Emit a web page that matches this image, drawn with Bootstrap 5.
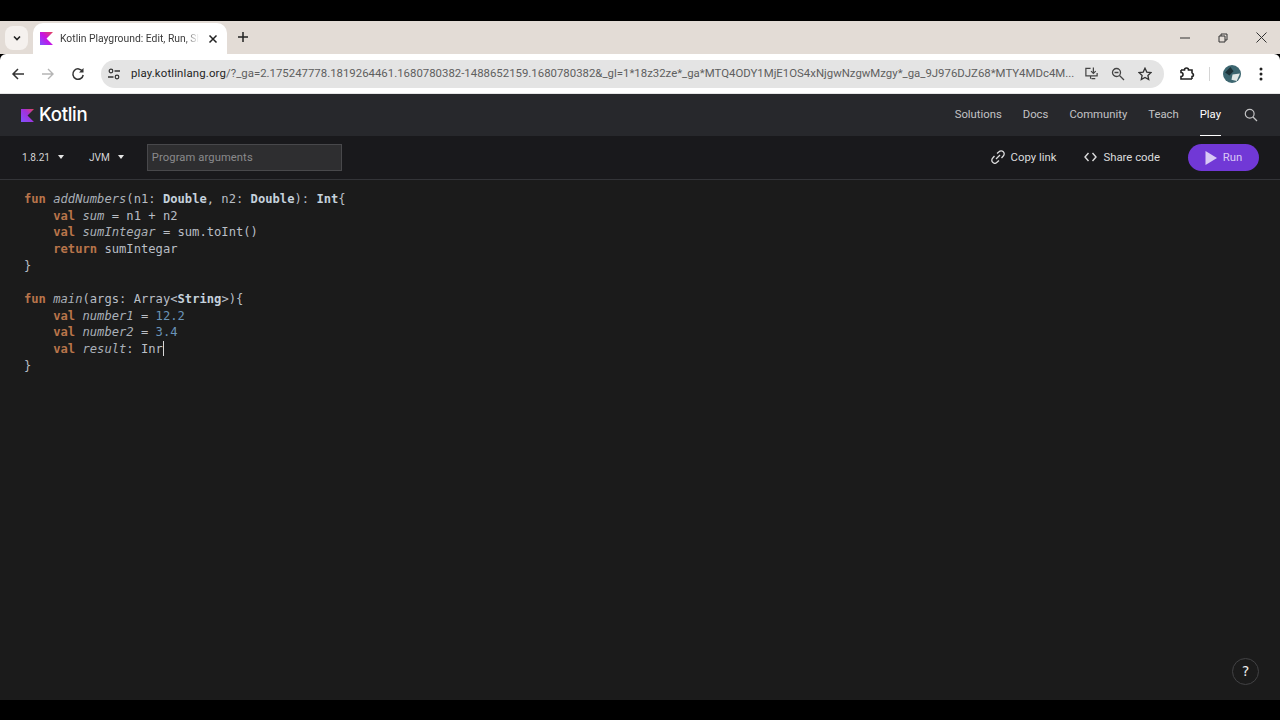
<!DOCTYPE html>
<html lang="en">
<head>
<meta charset="utf-8">
<title>Kotlin Playground</title>
<link href="https://cdn.jsdelivr.net/npm/bootstrap@5.3.0/dist/css/bootstrap.min.css" rel="stylesheet">
<style>
html,body{height:720px;overflow:hidden;background:#000;margin:0}
body{font-family:"Roboto","Noto Sans",sans-serif;padding:21px 0 20px}
.shell{height:679px;display:flex;flex-direction:column}
.tabstrip{height:33px;background:#e3dcd6;position:relative;flex:none}
.tabchev{width:23px;height:24px;background:#f5f1ee;border-radius:8px;margin-left:5px;margin-top:5px}
.browser-tab{width:194px;background:#fff;border-radius:10px 10px 0 0;margin-left:5px;margin-top:2px;padding:0 9px 0 7px;height:31px}
.tabtitle{font-family:"Roboto","Noto Sans",sans-serif;font-size:10.35px;color:#3a3a3a;width:139px;margin-left:7px;white-space:nowrap;-webkit-mask-image:linear-gradient(90deg,#000 90%,transparent 100%);mask-image:linear-gradient(90deg,#000 90%,transparent 100%)}
.winctl{margin-left:auto}
.winbtn{width:38px;height:33px}
.addrrow{height:40px;background:#fff;flex:none;padding-left:3px;padding-right:7px;border-bottom:1px solid #e6e6e6;border-radius:6px 6px 0 0}
.navbtn{width:30px;height:30px}
.omni{width:1063px;height:28px;background:#e4e4e4;border-radius:14px;margin-left:8px;padding:0 12px 0 6px}
.urltxt{font-family:"Roboto","Noto Sans",sans-serif;font-size:11.4px;color:#5f5f5f;white-space:nowrap;width:941px;margin-left:10px;flex:none}
.urltxt b{font-weight:400;color:#1f1f1f;letter-spacing:.15px}
.kt-nav{height:42px;background:#27282c;flex:none;padding:0 22px 0 21px}
.kt-word{font-family:"Inter",sans-serif;font-size:18.6px;color:#fff;font-weight:500;margin-left:5px;letter-spacing:-.3px}
.kt-link{font-size:11.3px;color:#c3c3c5;height:42px;display:flex;align-items:center;position:relative;margin-right:21px;text-decoration:none;padding-top:1px}
.kt-link.on{color:#fff;margin-right:23px}
.kt-link.on::after{content:"";position:absolute;left:0;right:0;bottom:0;height:1px;background:#fff}
.kt-tools{height:44px;background:#19191c;border-bottom:1px solid #333438;flex:none;padding:0 21px 0 22px}
.pick{font-size:10.1px;color:#d5d5d6;display:flex;align-items:center}
.pick::after{content:"";margin-left:8px;border-left:3.5px solid transparent;border-right:3.5px solid transparent;border-top:4px solid #e5e5e5}
.pick-jvm{margin-left:25px}
.argbox{width:195px;height:27px;background:#2e2e30;border:1px solid #48484b;color:#8a8a8c;font-size:11.2px;padding:1px 4px 0;display:flex;align-items:center;letter-spacing:.1px;margin-left:23px}
.tool{font-size:11.35px;color:#dcdcdd;display:flex;align-items:center;gap:6px}
.runbtn{width:71px;height:27px;background:#7138d6;color:#d9c9f5;border-radius:14px;font-size:11.3px;display:flex;align-items:center;justify-content:center;gap:6px;margin-left:28px;padding-top:1px}
.editor{flex:1;background:#1b1b1b;position:relative;padding:10.9px 0 0 24px;font-family:"DejaVu Sans Mono","Liberation Mono",monospace;font-size:12.15px;line-height:16.7px;color:#b9bec5;overflow:hidden}
.cl{height:16.7px;white-space:pre}
.kw{color:#b8744a;font-weight:700}
.fn{font-style:italic;color:#aab0b8}
.ty{color:#c5d1dc;font-weight:700}
.nm{color:#6a94b8}
.caret{display:inline-block;width:1px;height:15px;background:#d8d8d8;vertical-align:-3px}
.helpdot{position:absolute;right:21px;bottom:15px;width:27px;height:27px;border:1px solid #424244;border-radius:50%;color:#eee;font-size:14px;display:flex;align-items:center;justify-content:center}
</style>
</head>
<body>
<div class="shell">
  <div class="tabstrip d-flex align-items-start">
    <div class="tabchev d-flex align-items-center justify-content-center">
      <svg width="10" height="10" viewBox="0 0 10 10"><path d="M2 3.5 5 6.5 8 3.5" fill="none" stroke="#222" stroke-width="1.6"/></svg>
    </div>
    <div class="browser-tab d-flex align-items-center">
      <svg width="13" height="13" viewBox="0 0 13 13"><defs><linearGradient id="kg" x1="0" y1="1" x2="1" y2="0"><stop offset="0" stop-color="#7f52ff"/><stop offset=".5" stop-color="#c811e2"/><stop offset="1" stop-color="#e44857"/></linearGradient></defs><path d="M0 0H13L6.5 6.5 13 13H0Z" fill="url(#kg)"/></svg>
      <span class="tabtitle">Kotlin Playground: Edit, Run, Sh</span>
      <svg class="ms-auto" width="10" height="10" viewBox="0 0 10 10"><path d="M1.5 1.5 8.5 8.5M8.5 1.5 1.5 8.5" stroke="#222" stroke-width="1.5"/></svg>
    </div>
    <div class="ms-2 mt-2 d-flex">
      <svg width="16" height="16" viewBox="0 0 16 16"><path d="M8 3V13M3 8H13" stroke="#222" stroke-width="1.5"/></svg>
    </div>
    <div class="winctl d-flex">
      <div class="winbtn d-flex align-items-center justify-content-center"><svg width="10" height="10" viewBox="0 0 10 10"><path d="M0 5H10" stroke="#333" stroke-width="1"/></svg></div>
      <div class="winbtn d-flex align-items-center justify-content-center"><svg width="10" height="10" viewBox="0 0 10 10"><path d="M1 3H7V9H1ZM3 3V1H9V7H7" fill="none" stroke="#333" stroke-width="1"/></svg></div>
      <div class="winbtn d-flex align-items-center justify-content-center"><svg width="11" height="11" viewBox="0 0 11 11"><path d="M.5.5 10.5 10.5M10.5.5.5 10.5" stroke="#333" stroke-width="1"/></svg></div>
    </div>
  </div>

  <div class="addrrow d-flex align-items-center">
    <div class="navbtn d-flex align-items-center justify-content-center"><svg width="14" height="14" viewBox="0 0 14 14"><path d="M13 7H2M7 2 2 7 7 12" fill="none" stroke="#333" stroke-width="1.5"/></svg></div>
    <div class="navbtn d-flex align-items-center justify-content-center"><svg width="14" height="14" viewBox="0 0 14 14"><path d="M1 7H12M7 2 12 7 7 12" fill="none" stroke="#b5b5b5" stroke-width="1.4"/></svg></div>
    <div class="navbtn d-flex align-items-center justify-content-center"><svg width="14" height="14" viewBox="0 0 14 14"><path d="M11.6 4.5A5.2 5.2 0 1 0 12.2 8" fill="none" stroke="#333" stroke-width="1.5"/><path d="M12.5 1V5.5H8Z" fill="#333"/></svg></div>
    <div class="omni d-flex align-items-center">
      <svg style="flex:none" width="14" height="14" viewBox="0 0 14 14"><circle cx="4" cy="4" r="1.8" fill="none" stroke="#333" stroke-width="1.2"/><path d="M7.5 4H13M1 10H6.5" stroke="#333" stroke-width="1.3"/><circle cx="10" cy="10" r="1.8" fill="none" stroke="#333" stroke-width="1.2"/></svg>
      <span class="urltxt"><b>play.kotlinlang.org</b>/?_ga=2.175247778.1819264461.1680780382-1488652159.1680780382&amp;_gl=1*18z32ze*_ga*MTQ4ODY1MjE1OS4xNjgwNzgwMzgy*_ga_9J976DJZ68*MTY4MDc4M...</span>
      <svg style="margin-left:12px;flex:none" width="15" height="15" viewBox="0 0 16 15"><path d="M7 2H2V10H14V7M8 13H12M7 10V13M10 1V7M7.5 5 10 7.5 12.5 5" fill="none" stroke="#444" stroke-width="1.3"/></svg>
      <svg style="margin-left:12px;flex:none" width="14" height="14" viewBox="0 0 14 14"><circle cx="5.5" cy="5.5" r="4" fill="none" stroke="#444" stroke-width="1.3"/><path d="M8.5 8.5 13 13M3.5 5.5H7.5" stroke="#444" stroke-width="1.3"/></svg>
      <svg style="margin-left:13px;flex:none" width="14" height="14" viewBox="0 0 14 14"><path d="M7 1.2 8.8 5.1 13 5.6 9.9 8.4 10.7 12.6 7 10.5 3.3 12.6 4.1 8.4 1 5.6 5.2 5.1Z" fill="none" stroke="#333" stroke-width="1.3"/></svg>
    </div>
    <svg style="margin-left:15px" width="16" height="16" viewBox="0 0 16 16"><path d="M2 4H5.5A2 2 0 0 1 9.5 4H13V7.5M13 13H2V10.5A1.8 1.8 0 0 0 2 6.5V4" fill="none" stroke="#222" stroke-width="1.6"/><path d="M13 7.5A1.5 1.5 0 0 1 13 10.5V13" fill="none" stroke="#222" stroke-width="1.6"/></svg>
    <span style="width:1px;height:14px;background:#d5d5d5;margin-left:14px"></span>
    <svg style="margin-left:13px" width="18" height="18" viewBox="0 0 17 17"><circle cx="8.5" cy="8.5" r="8.5" fill="#3c6670"/><path d="M2 7 7 2 10 6 6 10Z" fill="#1d3238"/><path d="M9 9 16 8 13 15 8 14Z" fill="#dfe7e6"/></svg>
    <svg style="margin-left:18px" width="4" height="14" viewBox="0 0 4 14"><circle cx="2" cy="2" r="1.5" fill="#222"/><circle cx="2" cy="7" r="1.5" fill="#222"/><circle cx="2" cy="12" r="1.5" fill="#222"/></svg>
  </div>

  <nav class="kt-nav d-flex align-items-center">
    <svg width="13" height="13" viewBox="0 0 13 13"><defs><linearGradient id="kh" x1="0" y1="1" x2="1" y2="0"><stop offset="0" stop-color="#7f52ff"/><stop offset=".6" stop-color="#a530d8"/><stop offset="1" stop-color="#e44857"/></linearGradient></defs><path d="M0 0H13L6.5 6.5 13 13H0Z" fill="url(#kh)"/></svg>
    <span class="kt-word">Kotlin</span>
    <div class="ms-auto d-flex align-items-center">
      <a class="kt-link" href="#">Solutions</a>
      <a class="kt-link" href="#">Docs</a>
      <a class="kt-link" href="#">Community</a>
      <a class="kt-link" href="#">Teach</a>
      <a class="kt-link on" href="#">Play</a>
      <svg width="14" height="14" viewBox="0 0 14 14"><circle cx="5.7" cy="5.7" r="4.4" fill="none" stroke="#c3c3c5" stroke-width="1.2"/><path d="M9 9 13 13" stroke="#c3c3c5" stroke-width="1.2"/></svg>
    </div>
  </nav>

  <div class="kt-tools d-flex align-items-center">
    <span class="pick">1.8.21</span>
    <span class="pick pick-jvm">JVM</span>
    <div class="argbox">Program arguments</div>
    <div class="ms-auto d-flex align-items-center" style="gap:28px">
      <span class="tool"><svg width="14" height="14" viewBox="0 0 14 14"><path d="M6 3.5 8 1.7A2.5 2.5 0 0 1 12.3 6L10.5 8M8 10.5 6 12.3A2.5 2.5 0 0 1 1.7 8L3.5 6" fill="none" stroke="#dcdcdd" stroke-width="1.3"/><path d="M5 9 9 5" stroke="#dcdcdd" stroke-width="1.3"/></svg>Copy link</span>
      <span class="tool"><svg width="13" height="10" viewBox="0 0 13 10"><path d="M4.5 1 1 5 4.5 9M8.5 1 12 5 8.5 9" fill="none" stroke="#dcdcdd" stroke-width="1.4"/></svg>Share code</span>
    </div>
    <div class="runbtn"><svg width="12" height="14" viewBox="0 0 12 14"><path d="M.5 0 12 7 .5 14Z" fill="#d9c9f5"/></svg>Run</div>
  </div>

  <div class="editor">
    <div class="cl"><span class="kw">fun </span><span class="fn">addNumbers</span><span>(n1: </span><span class="ty">Double</span><span>, n2: </span><span class="ty">Double</span><span>): </span><span class="ty">Int</span><span>{</span></div>
    <div class="cl"><span class="kw">    val </span><span class="fn">sum</span><span> = n1 + n2</span></div>
    <div class="cl"><span class="kw">    val </span><span class="fn">sumIntegar</span><span> = sum.toInt()</span></div>
    <div class="cl"><span class="kw">    return </span><span>sumIntegar</span></div>
    <div class="cl"><span>}</span></div>
    <div class="cl"></div>
    <div class="cl"><span class="kw">fun </span><span class="fn">main</span><span>(args: Array&lt;</span><span class="ty">String</span><span>&gt;){</span></div>
    <div class="cl"><span class="kw">    val </span><span class="fn">number1</span><span> = </span><span class="nm">12.2</span></div>
    <div class="cl"><span class="kw">    val </span><span class="fn">number2</span><span> = </span><span class="nm">3.4</span></div>
    <div class="cl"><span class="kw">    val </span><span class="fn">result</span><span>: Inr</span><span class="caret"></span></div>
    <div class="cl"><span>}</span></div>
    <div class="helpdot">?</div>
  </div>
</div>
<script src="https://cdn.jsdelivr.net/npm/bootstrap@5.3.0/dist/js/bootstrap.bundle.min.js"></script>
</body>
</html>
